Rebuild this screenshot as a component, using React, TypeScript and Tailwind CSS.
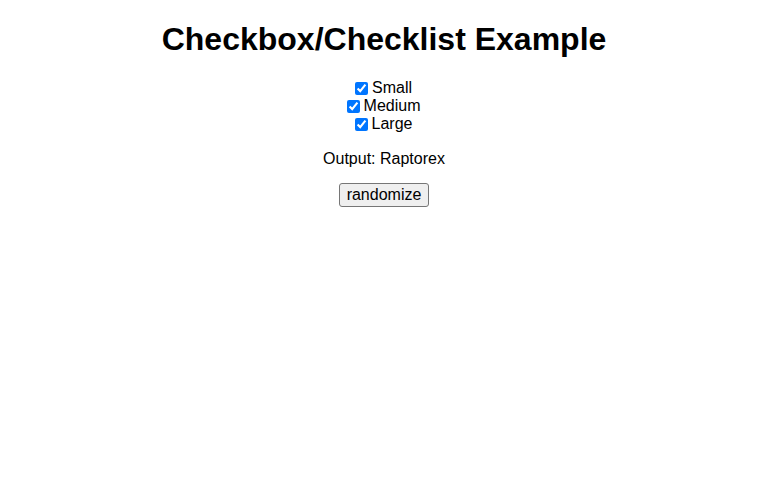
import { useState } from 'react';

const sizes = ['Small', 'Medium', 'Large'];

export default function App() {
  const [checked, setChecked] = useState<string[]>(sizes);
  const [output, setOutput] = useState('Raptorex');

  const toggle = (size: string) => {
    if (checked.includes(size)) {
      setChecked(checked.filter(s => s !== size));
    } else {
      setChecked([...checked, size]);
    }
  };

  const randomize = () => {
    const names = ['Raptorex', 'Compsognathus', 'Tyrannosaurus', 'Velociraptor'];
    setOutput(names[Math.floor(Math.random() * names.length)]);
  };

  return (
    <div className="min-h-screen bg-white text-black text-center font-['Liberation_Sans',Arial,sans-serif] text-[16px]">
      <h1 className="text-[32px] font-bold leading-[37px] py-[21px]">Checkbox/Checklist Example</h1>
      <div className="flex flex-col items-center">
        {sizes.map(size => (
          <label key={size} className="flex items-center h-[18px] leading-[18px] pr-[5px]">
            <input
              type="checkbox"
              checked={checked.includes(size)}
              onChange={() => toggle(size)}
              className="w-[13px] h-[13px] mt-[3px] mr-[4px] mb-[3px] ml-[4px]"
            />
            <span>{size}</span>
          </label>
        ))}
      </div>
      <p className="mt-[17px] mb-[15px] leading-[18px]">Output: {output}</p>
      <button
        onClick={randomize}
        className="bg-[#efefef] border border-[#767676] rounded-[3px] px-[7px] pt-[2px] pb-[2px] leading-[18px] hover:bg-[#e5e5e5]"
      >
        randomize
      </button>
    </div>
  );
}
